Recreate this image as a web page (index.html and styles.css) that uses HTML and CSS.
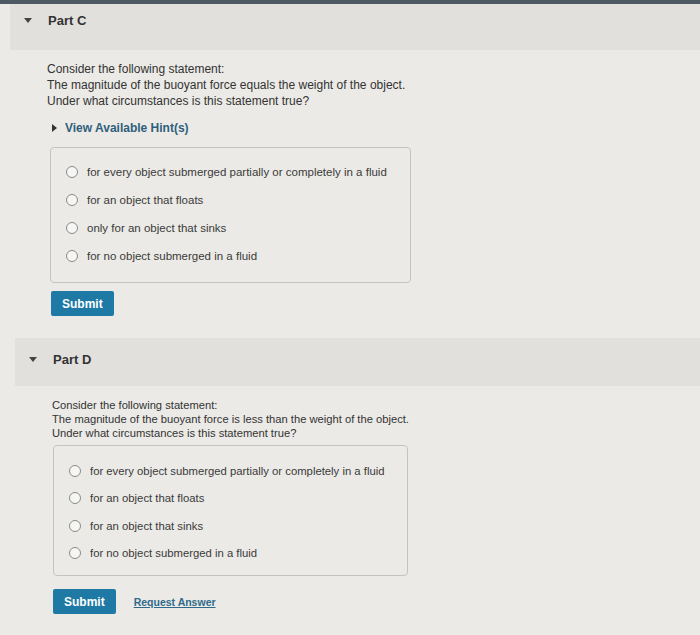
FILE: index.html
```html
<!DOCTYPE html>
<html lang="en">
<head>
    <meta charset="utf-8">
    <meta name="viewport" content="width=device-width,initial-scale=1.0">
    <title>Part C / Part D</title>
    <link rel="stylesheet" href="styles.css">
</head>
<body>
    <div class="topbar"></div>

    <div class="part">
        <div class="part-head">
            <span class="caret"></span>
            <span class="part-title">Part C</span>
        </div>
        <div class="part-body">
            <div class="prompt">
                <p>Consider the following statement:</p>
                <p>The magnitude of the buoyant force equals the weight of the object.</p>
                <p>Under what circumstances is this statement true?</p>
            </div>
            <div class="hints"><span class="hint-caret"></span>View Available Hint(s)</div>
            <div class="choices">
                <label class="choice"><span class="radio"></span>for every object submerged partially or completely in a fluid</label>
                <label class="choice"><span class="radio"></span>for an object that floats</label>
                <label class="choice"><span class="radio"></span>only for an object that sinks</label>
                <label class="choice"><span class="radio"></span>for no object submerged in a fluid</label>
            </div>
            <div class="actions">
                <button class="btn">Submit</button>
            </div>
        </div>
    </div>

    <div class="part part-d">
        <div class="part-head">
            <span class="caret"></span>
            <span class="part-title">Part D</span>
        </div>
        <div class="part-body">
            <div class="prompt">
                <p>Consider the following statement:</p>
                <p>The magnitude of the buoyant force is less than the weight of the object.</p>
                <p>Under what circumstances is this statement true?</p>
            </div>
            <div class="choices">
                <label class="choice"><span class="radio"></span>for every object submerged partially or completely in a fluid</label>
                <label class="choice"><span class="radio"></span>for an object that floats</label>
                <label class="choice"><span class="radio"></span>for an object that sinks</label>
                <label class="choice"><span class="radio"></span>for no object submerged in a fluid</label>
            </div>
            <div class="actions">
                <button class="btn">Submit</button>
                <a class="request" href="#">Request Answer</a>
            </div>
        </div>
    </div>
</body>
</html>
```

FILE: styles.css
```css
html, body {
    margin: 0;
    height: 100%;
}

body {
    background: #ebeae6;
    font-family: "Liberation Sans", Arial, sans-serif;
    color: #333;
    overflow: hidden;
}

p {
    margin: 0;
}

.topbar {
    height: 4px;
    background: #4d5a63;
}

.part-head {
    display: flex;
    align-items: center;
    height: 32px;
    padding-bottom: 14px;
    margin-left: 10px;
    background: #e1e0dc;
}

.caret {
    width: 0;
    height: 0;
    margin: 0 16px 0 14px;
    border-left: 4px solid transparent;
    border-right: 4px solid transparent;
    border-top: 5px solid #444;
}

.part-title {
    font-size: 13px;
    font-weight: bold;
    color: #333;
}

.part-body {
    padding-left: 47px;
}

.prompt {
    margin-top: 11px;
    font-size: 12px;
    line-height: 16px;
}

.hints {
    display: flex;
    align-items: center;
    margin-top: 11px;
    font-size: 12px;
    font-weight: bold;
    line-height: 16px;
    color: #2f5f7c;
}

.hint-caret {
    width: 0;
    height: 0;
    margin: 0 8px 0 5px;
    border-top: 4px solid transparent;
    border-bottom: 4px solid transparent;
    border-left: 5px solid #333;
}

.choices {
    width: 344px;
    margin: 11px 0 0 3px;
    padding: 10px 0 12px 15px;
    border: 1px solid #c4c3bf;
    border-radius: 4px;
}

.choice {
    display: flex;
    align-items: center;
    height: 28px;
    font-size: 11.5px;
    color: #3a3a3a;
}

.radio {
    width: 10px;
    height: 10px;
    margin-right: 9px;
    border: 1px solid #8b8b8b;
    border-radius: 50%;
    background: #f6f6f4;
}

.actions {
    display: flex;
    align-items: center;
    gap: 18px;
    margin: 8px 0 0 4px;
}

.btn {
    height: 25px;
    padding: 0 11px;
    border: none;
    border-radius: 2px;
    background: #1e79a4;
    color: #fff;
    font-family: inherit;
    font-size: 12px;
    font-weight: bold;
}

.request {
    font-size: 10.5px;
    font-weight: bold;
    color: #2f6a8c;
    text-decoration: underline;
}

.part-d {
    margin-top: 22px;
}

.part-d .part-head {
    margin-left: 15px;
    height: 42px;
    padding-bottom: 6px;
}

.part-d .part-body {
    padding-left: 52px;
}

.part-d .prompt {
    margin-top: 12px;
    font-size: 11.2px;
    line-height: 14px;
}

.part-d .choices {
    width: 338px;
    margin-left: 1px;
    margin-top: 5px;
    padding: 11px 0 8px 15px;
}

.part-d .choice {
    height: 27.5px;
    font-size: 11.3px;
}

.part-d .actions {
    margin-left: 1px;
    margin-top: 13px;
}
```
